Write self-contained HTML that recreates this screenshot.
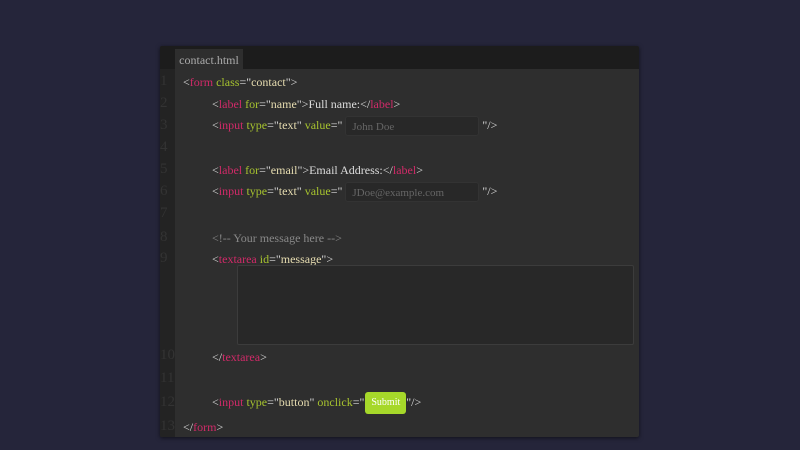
<!DOCTYPE html>
<html><head><style>
body{margin:0;width:800px;height:450px;background:#25253a;overflow:hidden;font-family:"Liberation Serif",serif;}
.win{position:absolute;left:160px;top:46px;width:479px;height:391px;background:#2e2e2e;box-shadow:0 1px 4px rgba(0,0,0,.6);border-radius:2px;overflow:hidden}
.bar{position:absolute;left:0;top:0;right:0;height:23px;background:#1c1c1c}
.tab{position:absolute;left:15px;top:3px;width:68px;height:20px;background:#2e2e2e;color:#aaa;font-size:12px;line-height:22px;text-align:center}
.gut{position:absolute;left:0;top:23px;width:15px;bottom:0;background:#232323}
.n{position:absolute;left:0;font-size:15px;color:#333;}
.l{position:absolute;font-size:12px;color:#ddd;white-space:nowrap;line-height:16px}
.p{color:#d02a68}.g{color:#a6c22e}.s{color:#e6dcb0}.c{color:#888}
.in{display:inline-block;width:134px;height:20px;background:#282828;border:1px solid #333;border-radius:3px;color:#666;font-size:11px;line-height:20px;padding-left:6px;box-sizing:border-box;vertical-align:middle;margin:0 3px}
.ta{position:absolute;left:77px;top:219px;width:395px;height:78px;background:#282828;border:1px solid #3c3c3c;border-radius:2px}
.btn{display:inline-block;background:#a6d82a;color:#fff;font-size:10px;padding:0 6px;height:22px;line-height:22px;border-radius:3px;vertical-align:middle;margin-left:1px}
</style></head><body>
<div class="win">
<div class="bar"><div class="tab">contact.html</div></div>
<div class="gut"></div>
<div class="n" style="top:27px">1</div><div class="n" style="top:49px">2</div><div class="n" style="top:71px">3</div><div class="n" style="top:93px">4</div><div class="n" style="top:115px">5</div><div class="n" style="top:137px">6</div><div class="n" style="top:159px">7</div><div class="n" style="top:183px">8</div><div class="n" style="top:204px">9</div><div class="n" style="top:301px">10</div><div class="n" style="top:324px">11</div><div class="n" style="top:348px">12</div><div class="n" style="top:372px">13</div>
<div class="l" style="left:23px;top:28px">&lt;<span class="p">form</span> <span class="g">class</span>="<span class="s">contact</span>"&gt;</div>
<div class="l" style="left:52px;top:50px">&lt;<span class="p">label</span> <span class="g">for</span>="<span class="s">name</span>"&gt;Full name:&lt;/<span class="p">label</span>&gt;</div>
<div class="l" style="left:52px;top:70px">&lt;<span class="p">input</span> <span class="g">type</span>="<span class="s">text</span>" <span class="g">value</span>="<span class="in">John Doe</span>"/&gt;</div>
<div class="l" style="left:52px;top:116px">&lt;<span class="p">label</span> <span class="g">for</span>="<span class="s">email</span>"&gt;Email Address:&lt;/<span class="p">label</span>&gt;</div>
<div class="l" style="left:52px;top:136px">&lt;<span class="p">input</span> <span class="g">type</span>="<span class="s">text</span>" <span class="g">value</span>="<span class="in">JDoe@example.com</span>"/&gt;</div>
<div class="l c" style="left:52px;top:184px">&lt;!-- Your message here --&gt;</div>
<div class="l" style="left:52px;top:205px">&lt;<span class="p">textarea</span> <span class="g">id</span>="<span class="s">message</span>"&gt;</div>
<div class="ta"></div>
<div class="l" style="left:52px;top:303px">&lt;/<span class="p">textarea</span>&gt;</div>
<div class="l" style="left:52px;top:346px">&lt;<span class="p">input</span> <span class="g">type</span>="<span class="s">button</span>" <span class="g">onclick</span>="<span class="btn">Submit</span>"/&gt;</div>
<div class="l" style="left:23px;top:373px">&lt;/<span class="p">form</span>&gt;</div>
</div>
</body></html>
